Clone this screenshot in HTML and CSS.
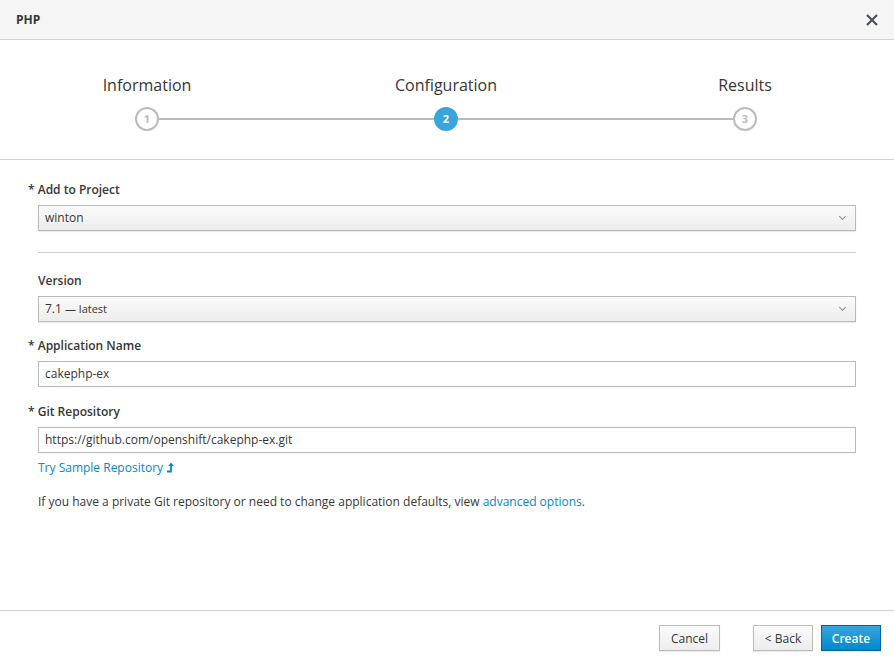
FILE: index.html
```html
<html>
<head>
  <meta charset="UTF-8" />
  <link rel="stylesheet" href="styles.css">
</head>
<body>

  <div class="modal-header">
    <h4 class="modal-title">PHP</h4>
    <span class="close">
      <svg width="14" height="14" viewBox="0 0 14 14"><path d="M2 2 L12 12 M12 2 L2 12" stroke="#4d5258" stroke-width="2.2" fill="none"/></svg>
    </span>
  </div>

  <div class="wizard">
    <div class="wizard-line"></div>
    <div class="step">
      <div class="step-label">Information</div>
      <div class="step-num">1</div>
    </div>
    <div class="step active">
      <div class="step-label">Configuration</div>
      <div class="step-num">2</div>
    </div>
    <div class="step">
      <div class="step-label">Results</div>
      <div class="step-num">3</div>
    </div>
  </div>

  <div class="form-body">
    <div class="form-group">
      <label class="required">Add to Project</label>
      <div class="select">winton<span class="caret"></span></div>
    </div>

    <hr class="sep">

    <div class="form-group">
      <label>Version</label>
      <div class="select">7.1 <span class="small">&mdash; latest</span><span class="caret"></span></div>
    </div>

    <div class="form-group spaced">
      <label class="required">Application Name</label>
      <div class="input">cakephp-ex</div>
    </div>

    <div class="form-group">
      <label class="required">Git Repository</label>
      <div class="input">https://github.com/openshift/cakephp-ex.git</div>
      <a class="sample-link">Try Sample Repository
        <svg width="8" height="11" viewBox="0 0 8 11"><path d="M1 9.5 H5 V3" stroke="#0088ce" stroke-width="1.8" fill="none"/><path d="M2.2 4 L5 0.5 L7.8 4 Z" fill="#0088ce"/></svg>
      </a>
    </div>

    <p class="help">If you have a private Git repository or need to change application defaults, view <a>advanced options</a>.</p>
  </div>

  <div class="modal-footer">
    <button class="btn">Cancel</button>
    <button class="btn back">&lt; Back</button>
    <button class="btn primary">Create</button>
  </div>

</body>
</html>
```

FILE: styles.css
```css
body {
    margin: 0;
    font-family: "Open Sans", sans-serif;
    font-size: 12px;
    color: #363636;
    background: #fff;
}

.modal-header {
    height: 39px;
    background: #f5f5f5;
    border-bottom: 1px solid #d1d1d1;
    display: flex;
    align-items: center;
    justify-content: space-between;
    padding: 0 15px 0 16px;
}

.modal-title {
    margin: 0;
    font-size: 12px;
    font-weight: 700;
}

.close {
    display: flex;
}

.wizard {
    position: relative;
    height: 119px;
    border-bottom: 1px solid #d1d1d1;
    display: flex;
    justify-content: space-between;
    padding: 0 37px 0 35px;
}

.wizard-line {
    position: absolute;
    left: 147px;
    right: 148px;
    top: 78px;
    height: 2px;
    background: #bbb;
}

.step {
    position: relative;
    width: 224px;
    display: flex;
    flex-direction: column;
    align-items: center;
}

.step-label {
    margin-top: 34px;
    font-size: 16px;
    line-height: 22px;
    color: #363636;
}

.step-num {
    margin-top: 11px;
    width: 20px;
    height: 20px;
    border: 2px solid #bbb;
    border-radius: 50%;
    background: #fff;
    color: #bbb;
    font-size: 11px;
    font-weight: 700;
    line-height: 20px;
    text-align: center;
}

.step.active .step-num {
    background: #39a5dc;
    border-color: #39a5dc;
    color: #fff;
}

.form-body {
    padding: 21px 38px 0 38px;
    height: 429px;
}

.form-group {
    margin-bottom: 15px;
}

.form-group.spaced {
    margin-bottom: 16px;
}

label {
    display: block;
    font-weight: 600;
    line-height: 18px;
    margin-bottom: 6px;
}

label.required:before {
    content: '* ';
    margin-left: -10px;
}

.select, .input {
    box-sizing: border-box;
    height: 26px;
    border: 1px solid #bbb;
    padding: 0 6px;
    line-height: 24px;
    position: relative;
}

.select {
    background: linear-gradient(#fafafa, #ededed);
    box-shadow: 0 1px 1px rgba(3, 3, 3, 0.08);
}

.input {
    background: #fff;
}

.small {
    font-size: 11px;
}

.caret {
    position: absolute;
    right: 10px;
    top: 8px;
    width: 4px;
    height: 4px;
    border-right: 1px solid #8b8d8f;
    border-bottom: 1px solid #8b8d8f;
    transform: rotate(45deg);
}

.sep {
    border: 0;
    border-top: 1px solid #d1d1d1;
    margin: 21px 0 19px;
}

a {
    color: #0088ce;
}

.sample-link {
    display: inline-block;
    margin-top: 6px;
    line-height: 18px;
}

.sample-link svg {
    vertical-align: -1px;
}

.help {
    margin: 16px 0 0;
    line-height: 18px;
}

.modal-footer {
    border-top: 1px solid #d1d1d1;
    padding: 14px 13px 0 0;
    display: flex;
    justify-content: flex-end;
}

.btn {
    height: 26px;
    width: 61px;
    border: 1px solid #bbb;
    background: linear-gradient(#fafafa, #ededed);
    box-shadow: 0 1px 1px rgba(3, 3, 3, 0.08);
    font-family: "Open Sans", sans-serif;
    font-size: 12px;
    color: #363636;
    padding: 0;
    margin-left: 8px;
}

.btn.back {
    width: 60px;
    margin-left: 33px;
}

.btn.primary {
    width: 60px;
    background: linear-gradient(#39a5dc, #0088ce);
    border-color: #00659c;
    color: #fff;
    font-weight: 600;
}
```
